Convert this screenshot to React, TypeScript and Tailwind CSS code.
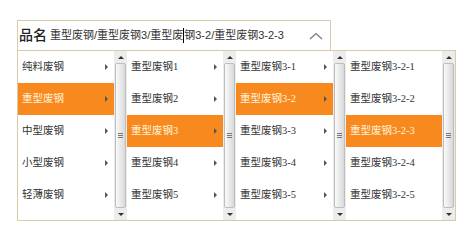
import React from "react";

type Col = { items: string[]; active: number; arrows: boolean; w: string };

const cols: Col[] = [
  { items: ["纯料废钢", "重型废钢", "中型废钢", "小型废钢", "轻薄废钢"], active: 1, arrows: true, w: "w-[109px]" },
  { items: ["重型废钢1", "重型废钢2", "重型废钢3", "重型废钢4", "重型废钢5"], active: 2, arrows: true, w: "w-[109px]" },
  { items: ["重型废钢3-1", "重型废钢3-2", "重型废钢3-3", "重型废钢3-4", "重型废钢3-5"], active: 1, arrows: true, w: "w-[110px]" },
  { items: ["重型废钢3-2-1", "重型废钢3-2-2", "重型废钢3-2-3", "重型废钢3-2-4", "重型废钢3-2-5"], active: 2, arrows: false, w: "w-[109px]" },
];

const Scrollbar = () => (
  <div className="w-[13px] h-full bg-[#ececec] flex flex-col items-center">
    <div className="h-[12px] flex items-center justify-center">
      <span className="w-0 h-0 border-l-[3px] border-r-[3px] border-b-[3px] border-l-transparent border-r-transparent border-b-[#333]" />
    </div>
    <div className="flex-1 w-[11px] rounded-[2px] border border-[#bdbdbd] bg-gradient-to-r from-[#fafafa] to-[#d9d9d9] flex items-center justify-center">
      <div className="flex flex-col gap-[1px]">
        <span className="block w-[5px] h-px bg-[#777]" />
        <span className="block w-[5px] h-px bg-[#777]" />
        <span className="block w-[5px] h-px bg-[#777]" />
      </div>
    </div>
    <div className="h-[12px] flex items-center justify-center">
      <span className="w-0 h-0 border-l-[3px] border-r-[3px] border-t-[3px] border-l-transparent border-r-transparent border-t-[#333]" />
    </div>
  </div>
);

const Column = ({ col }: { col: Col }) => (
  <div className={`${col.w} h-full flex`}>
    <div className="flex-1 flex flex-col">
      {col.items.map((t, i) => {
        const on = i === col.active;
        return (
          <div
            key={t}
            className={`h-[32px] flex items-center justify-between pl-[4px] pr-[6px] text-[10.5px] whitespace-nowrap ${
              on ? "bg-[#f8891f] text-[#fff3dc]" : "text-[#333]"
            }`}
          >
            <span>{t}</span>
            {col.arrows && (
              <span className="w-0 h-0 border-t-[3px] border-b-[3px] border-l-[3px] border-t-transparent border-b-transparent border-l-[#555]" />
            )}
          </div>
        );
      })}
    </div>
    <Scrollbar />
  </div>
);

const App = () => {
  return (
    <div
      className="w-[474px] h-[241px] bg-white pt-[20px] pl-[17px]"
      style={{ fontFamily: '"Liberation Serif", "Noto Sans CJK SC", serif' }}
    >
      <div
        className="w-[314px] h-[30px] border border-b-0 border-[#d8cba8] flex items-center pl-[1px] pr-[5px] whitespace-nowrap"
        style={{ fontFamily: '"Liberation Sans", "Noto Sans CJK SC", sans-serif' }}
      >
        <span className="text-[14px] text-[#222] font-medium mr-[3px]">品名</span>
        <span className="text-[11px] text-[#333] flex items-center">
          重型废钢/重型废钢3/重型废
          <span className="inline-block w-px h-[15px] bg-black" />
          钢3-2/重型废钢3-2-3
        </span>
        <svg className="ml-auto mr-[2px]" width="14" height="8" viewBox="0 0 14 8">
          <path d="M1 7 L7 1.5 L13 7" fill="none" stroke="#777" strokeWidth="1.2" />
        </svg>
      </div>
      <div className="w-[439px] h-[171px] border border-[#d8cba8] flex">
        {cols.map((c, i) => (
          <Column key={i} col={c} />
        ))}
      </div>
    </div>
  );
};

export default App;
